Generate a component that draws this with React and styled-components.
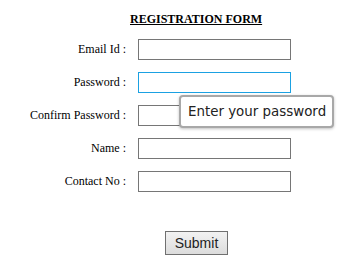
import React from "react";
import styled, { createGlobalStyle } from "styled-components";

const GlobalStyle = createGlobalStyle`
	html, body {
		margin: 0;
		padding: 0;
		background: #fff;
	}
	body {
		font-family: "Liberation Serif", "Times New Roman", serif;
		color: #000;
	}
`;

const Page = styled.div`
	position: relative;
	width: 356px;
	height: 273px;
	overflow: hidden;
`;

const Title = styled.h3`
	margin: 0;
	padding: 12px 0 0 130px;
	font-size: 12px;
	font-weight: bold;
	text-decoration: underline;
	line-height: 15px;
`;

const Form = styled.form`
	display: grid;
	grid-template-columns: 126px 153px;
	column-gap: 12px;
	row-gap: 12px;
	padding-top: 12px;
	align-items: center;
`;

const Label = styled.label`
	text-align: right;
	font-size: 12px;
	line-height: 21px;
`;

const Input = styled.input`
	box-sizing: border-box;
	width: 153px;
	height: 21px;
	margin: 0;
	padding: 1px 2px;
	border: 1px solid ${(p) => (p.$focused ? "#1ba1e2" : "#767676")};
	outline: none;
	font-size: 13px;
`;

const Actions = styled.div`
	display: flex;
	padding: 39px 0 0 165px;
`;

const Button = styled.button`
	box-sizing: border-box;
	width: 63px;
	height: 24px;
	margin: 0;
	padding: 0;
	border: 1px solid #707070;
	background: linear-gradient(#f2f2f2, #dcdcdc);
	font-family: "Liberation Sans", Arial, sans-serif;
	font-size: 14px;
	color: #222;
`;

const Tooltip = styled.div`
	position: absolute;
	left: 179px;
	top: 95px;
	box-sizing: border-box;
	width: 155px;
	height: 33px;
	display: flex;
	align-items: center;
	padding-left: 7px;
	border: 2px solid #a8a8a8;
	border-radius: 4px;
	background: #fff;
	box-shadow: 0 1px 3px rgba(0, 0, 0, 0.25);
	font-family: "DejaVu Sans", Verdana, sans-serif;
	font-size: 13.4px;
	color: #222;
	white-space: nowrap;
`;

const fields = [
	{ label: "Email Id :", type: "text" },
	{ label: "Password :", type: "password", focused: true },
	{ label: "Confirm Password :", type: "password" },
	{ label: "Name :", type: "text" },
	{ label: "Contact No :", type: "text" },
];

export default function App() {
	return (
		<>
			<GlobalStyle />
			<Page>
				<Title>REGISTRATION FORM</Title>
				<Form onSubmit={(e) => e.preventDefault()}>
					{fields.map((f) => (
						<React.Fragment key={f.label}>
							<Label>{f.label}</Label>
							<Input type={f.type} $focused={f.focused} />
						</React.Fragment>
					))}
				</Form>
				<Actions>
					<Button type="button">Submit</Button>
				</Actions>
				<Tooltip>Enter your password</Tooltip>
			</Page>
		</>
	);
}
